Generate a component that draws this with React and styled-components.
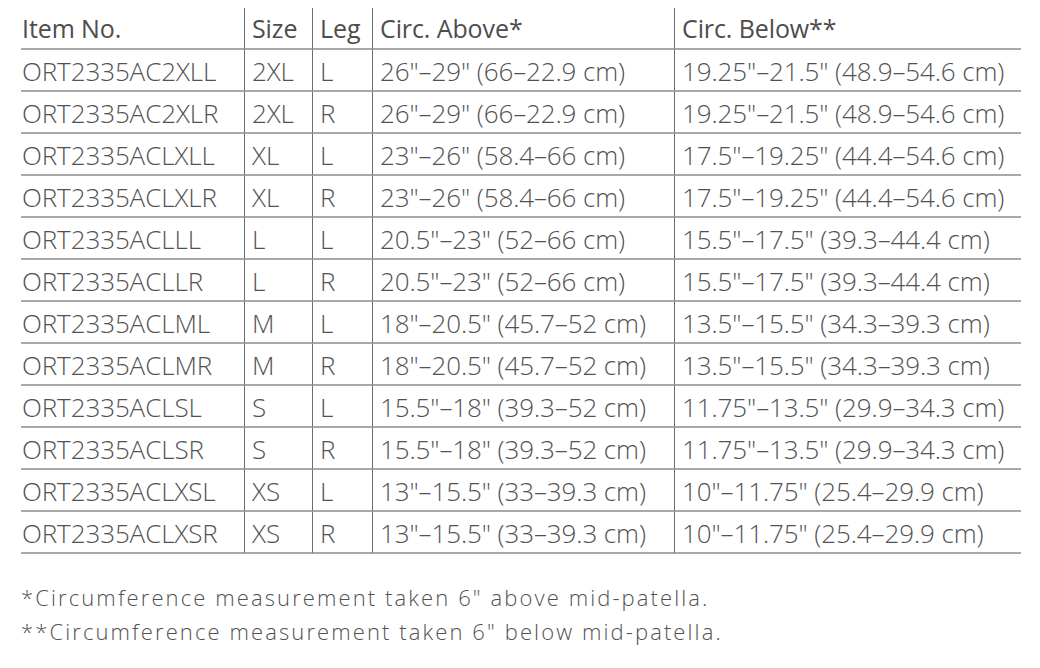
import React from "react";
import styled, { createGlobalStyle } from "styled-components";

const GlobalStyle = createGlobalStyle`
  html, body {
    margin: 0;
    padding: 0;
    background: #ffffff;
  }
  body {
    font-family: "Open Sans", "Noto Sans", sans-serif;
    color: #555555;
  }
`;

const Page = styled.div`
  width: 1040px;
  height: 668px;
  padding: 8px 0 0 21px;
  box-sizing: border-box;
  display: flex;
  flex-direction: column;
`;

const Table = styled.div`
  display: grid;
  grid-template-columns: 223px 68px 60px 302px 347px;
  width: 1000px;
`;

const Cell = styled.div`
  height: 42px;
  box-sizing: border-box;
  border-bottom: 2px solid #a8a8a8;
  border-left: ${(p) => (p.$first ? "none" : "1px solid #6e6e6e")};
  padding-left: ${(p) => (p.$first ? "1px" : "7px")};
  padding-top: ${(p) => (p.$head ? "0" : "2px")};
  display: flex;
  align-items: center;
  font-size: ${(p) => (p.$head ? "25px" : "26px")};
  font-weight: ${(p) => (p.$head ? 400 : 300)};
  letter-spacing: ${(p) => (p.$head ? "-0.1px" : "-0.1px")};
  color: ${(p) => (p.$head ? "#4d4d4d" : "#525252")};
  white-space: nowrap;
`;

const Notes = styled.div`
  margin-top: 26px;
  display: flex;
  flex-direction: column;
`;

const Note = styled.div`
  font-size: 22px;
  font-weight: 300;
  line-height: 34px;
  color: #525252;
  letter-spacing: 2.1px;
`;

const head = ["Item No.", "Size", "Leg", "Circ. Above*", "Circ. Below**"];

const rows = [
  ["ORT2335AC2XLL", "2XL", "L", "26\"–29\" (66–22.9 cm)", "19.25\"–21.5\" (48.9–54.6 cm)"],
  ["ORT2335AC2XLR", "2XL", "R", "26\"–29\" (66–22.9 cm)", "19.25\"–21.5\" (48.9–54.6 cm)"],
  ["ORT2335ACLXLL", "XL", "L", "23\"–26\" (58.4–66 cm)", "17.5\"–19.25\" (44.4–54.6 cm)"],
  ["ORT2335ACLXLR", "XL", "R", "23\"–26\" (58.4–66 cm)", "17.5\"–19.25\" (44.4–54.6 cm)"],
  ["ORT2335ACLLL", "L", "L", "20.5\"–23\" (52–66 cm)", "15.5\"–17.5\" (39.3–44.4 cm)"],
  ["ORT2335ACLLR", "L", "R", "20.5\"–23\" (52–66 cm)", "15.5\"–17.5\" (39.3–44.4 cm)"],
  ["ORT2335ACLML", "M", "L", "18\"–20.5\" (45.7–52 cm)", "13.5\"–15.5\" (34.3–39.3 cm)"],
  ["ORT2335ACLMR", "M", "R", "18\"–20.5\" (45.7–52 cm)", "13.5\"–15.5\" (34.3–39.3 cm)"],
  ["ORT2335ACLSL", "S", "L", "15.5\"–18\" (39.3–52 cm)", "11.75\"–13.5\" (29.9–34.3 cm)"],
  ["ORT2335ACLSR", "S", "R", "15.5\"–18\" (39.3–52 cm)", "11.75\"–13.5\" (29.9–34.3 cm)"],
  ["ORT2335ACLXSL", "XS", "L", "13\"–15.5\" (33–39.3 cm)", "10\"–11.75\" (25.4–29.9 cm)"],
  ["ORT2335ACLXSR", "XS", "R", "13\"–15.5\" (33–39.3 cm)", "10\"–11.75\" (25.4–29.9 cm)"],
];

export default function App() {
  return (
    <Page>
      <GlobalStyle />
      <Table>
        {head.map((h, i) => (
          <Cell key={h} $head $first={i === 0}>
            {h}
          </Cell>
        ))}
        {rows.map((row, r) =>
          row.map((c, i) => (
            <Cell key={r + "-" + i} $first={i === 0}>
              {c}
            </Cell>
          ))
        )}
      </Table>
      <Notes>
        <Note>*Circumference measurement taken 6" above mid-patella.</Note>
        <Note>**Circumference measurement taken 6" below mid-patella.</Note>
      </Notes>
    </Page>
  );
}
